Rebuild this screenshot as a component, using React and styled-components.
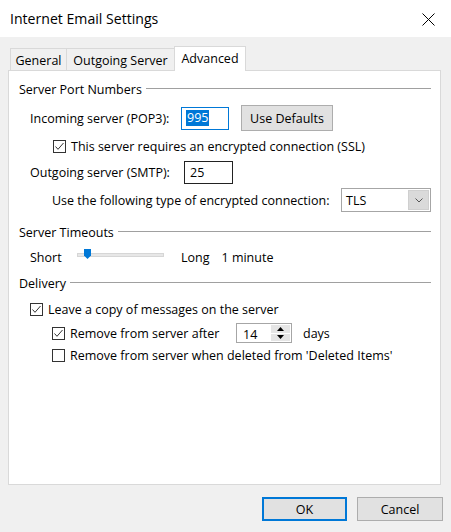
import React from 'react'
import styled, { createGlobalStyle } from 'styled-components'

const GlobalStyle = createGlobalStyle`
  html, body {
    margin: 0;
    padding: 0;
    background: #f0f0f0;
  }
  body {
    font-family: "Open Sans", "Noto Sans", sans-serif;
    font-size: 12.5px;
    color: #000;
  }
`

const Window = styled.div`
  width: 451px;
  height: 532px;
  display: flex;
  flex-direction: column;
  background: #f0f0f0;
  overflow: hidden;
`
const TitleBar = styled.div`
  height: 37px;
  background: #fff;
  display: flex;
  align-items: center;
  justify-content: space-between;
  padding: 0 16px 0 10px;
  flex-shrink: 0;
`
const Title = styled.span`
  font-size: 14.1px;
  margin-top: -1px;
`
const CloseIcon = styled.svg`
  width: 13px;
  height: 13px;
  margin-top: 1px;
`
const TabStrip = styled.div`
  display: flex;
  align-items: flex-end;
  height: 24px;
  margin: 9px 0 0 10px;
  flex-shrink: 0;
`
const Tab = styled.div`
  position: relative;
  box-sizing: border-box;
  height: ${(p) => (p.$active ? 25 : 22)}px;
  width: ${(p) => p.$w}px;
  margin-left: ${(p) => (p.$first ? 0 : -1)}px;
  margin-bottom: ${(p) => (p.$active ? -1 : 0)}px;
  border: 1px solid #d9d9d9;
  border-bottom: none;
  background: ${(p) => (p.$active ? '#fff' : '#f0f0f0')};
  z-index: ${(p) => (p.$active ? 2 : 1)};
  display: flex;
  align-items: center;
  justify-content: center;
  white-space: nowrap;
  padding-top: ${(p) => (p.$active ? 0 : 2)}px;
  padding-bottom: ${(p) => (p.$active ? 2 : 0)}px;
`
const Panel = styled.div`
  box-sizing: border-box;
  height: 415px;
  margin: 0 10px 0 8px;
  background: #fff;
  border: 1px solid #d9d9d9;
  display: flex;
  flex-direction: column;
  padding: 8px 9px 0 10px;
  flex-shrink: 0;
`
const GroupHeader = styled.div`
  display: flex;
  align-items: center;
  height: 20px;
  margin-top: ${(p) => p.$mt || 0}px;
  gap: 4px;
`
const GroupLine = styled.div`
  flex: 1;
  height: 1px;
  background: #a0a0a0;
  margin-top: -1px;
`
const Row = styled.div`
  display: flex;
  align-items: center;
  height: ${(p) => p.$h}px;
  margin-top: ${(p) => p.$mt || 0}px;
  padding-left: ${(p) => p.$indent || 0}px;
`
const Label = styled.span`
  display: inline-block;
  white-space: nowrap;
  width: ${(p) => (p.$w ? `${p.$w}px` : 'auto')};
  margin-right: ${(p) => p.$mr || 0}px;
  flex-shrink: 0;
`
const TextBox = styled.div`
  box-sizing: border-box;
  width: ${(p) => p.$w}px;
  height: 23px;
  border: 1px solid ${(p) => (p.$focused ? '#0078d7' : '#222')};
  background: #fff;
  display: flex;
  align-items: center;
  padding-left: ${(p) => p.$pl}px;
`
const Selected = styled.span`
  background: #0078d7;
  color: #fff;
  line-height: 16px;
  padding: 0 1px;
`
const Button = styled.button`
  box-sizing: border-box;
  width: ${(p) => p.$w}px;
  height: ${(p) => p.$h}px;
  margin-left: ${(p) => p.$ml || 0}px;
  background: #e1e1e1;
  border: ${(p) => (p.$default ? '2px solid #0078d7' : '1px solid #adadad')};
  font: inherit;
  color: #000;
  padding: 0;
  cursor: default;
`
const CheckRow = styled(Row)`
  gap: 5px;
`
const Box = styled.span`
  box-sizing: border-box;
  width: 13px;
  height: 13px;
  border: 1px solid #333;
  background: #fff;
  display: inline-flex;
  flex-shrink: 0;
`
const Select = styled.div`
  box-sizing: border-box;
  width: 91px;
  height: 24px;
  border: 1px solid #a6a6a6;
  background: #fff;
  display: flex;
  align-items: stretch;
`
const SelectValue = styled.span`
  flex: 1;
  display: flex;
  align-items: center;
  padding-left: 4px;
`
const SelectArrow = styled.span`
  width: 21px;
  margin: 1px;
  background: #dadada;
  border: 1px solid #cfcfcf;
  box-sizing: border-box;
  display: flex;
  align-items: center;
  justify-content: center;
`
const Slider = styled.div`
  position: relative;
  width: 87px;
  height: 16px;
  margin-right: 17px;
  display: flex;
  align-items: center;
  flex-shrink: 0;
`
const Track = styled.div`
  box-sizing: border-box;
  width: 100%;
  height: 4px;
  background: #e7e7e7;
  border: 1px solid #d6d6d6;
  margin-top: -5px;
`
const Thumb = styled.svg`
  position: absolute;
  left: 7px;
  top: 0;
  width: 7px;
  height: 10px;
`
const Spin = styled.div`
  box-sizing: border-box;
  width: 56px;
  height: 20px;
  border: 1px solid #a6a6a6;
  background: #fff;
  display: flex;
  margin-right: 6px;
`
const SpinValue = styled.span`
  flex: 1;
  display: flex;
  align-items: center;
  padding-left: 6px;
  padding-top: 2px;
`
const SpinButtons = styled.div`
  width: 19px;
  display: flex;
  flex-direction: column;
  gap: 1px;
  padding: 1px 1px 1px 0;
`
const SpinBtn = styled.span`
  flex: 1;
  background: #e5e5e5;
  display: flex;
  align-items: center;
  justify-content: center;
`
const Footer = styled.div`
  display: flex;
  justify-content: flex-end;
  gap: 10px;
  padding: 12px 8px 0 0;
`

const Check = () => (
  <svg width="11" height="11" viewBox="0 0 11 11">
    <polyline points="1.5,5.5 4,8.3 9.5,2" fill="none" stroke="#333" strokeWidth="1" />
  </svg>
)

function CheckBox({ checked }) {
  return <Box>{checked && <Check />}</Box>
}

export default function App() {
  return (
    <>
      <GlobalStyle />
      <Window>
        <TitleBar>
          <Title>Internet Email Settings</Title>
          <CloseIcon viewBox="0 0 13 13">
            <path d="M0.5 0.5 L12.5 12.5 M12.5 0.5 L0.5 12.5" stroke="#000" strokeWidth="1" />
          </CloseIcon>
        </TitleBar>

        <TabStrip>
          <Tab $first $w={57}>General</Tab>
          <Tab $w={109}>Outgoing Server</Tab>
          <Tab $active $w={72}>Advanced</Tab>
        </TabStrip>

        <Panel>
          <GroupHeader>
            <span>Server Port Numbers</span>
            <GroupLine />
          </GroupHeader>
          <Row $h={26} $mt={6} $indent={11}>
            <Label $w={151}>Incoming server (POP3):</Label>
            <TextBox $focused $w={48} $pl={4}>
              <Selected>995</Selected>
            </TextBox>
            <Button $w={92} $h={26} $ml={12}>Use Defaults</Button>
          </Row>
          <CheckRow $h={16} $mt={7} $indent={34}>
            <CheckBox checked />
            <Label>This server requires an encrypted connection (SSL)</Label>
          </CheckRow>
          <Row $h={24} $mt={6} $indent={11}>
            <Label $w={154}>Outgoing server (SMTP):</Label>
            <TextBox $w={49} $pl={5}>25</TextBox>
          </Row>
          <Row $h={24} $mt={4} $indent={33}>
            <Label $w={289}>Use the following type of encrypted connection:</Label>
            <Select>
              <SelectValue>TLS</SelectValue>
              <SelectArrow>
                <svg width="8" height="5" viewBox="0 0 8 5">
                  <polyline points="0.5,0.5 4,4 7.5,0.5" fill="none" stroke="#555" strokeWidth="1" />
                </svg>
              </SelectArrow>
            </Select>
          </Row>

          <GroupHeader $mt={10}>
            <span>Server Timeouts</span>
            <GroupLine />
          </GroupHeader>
          <Row $h={16} $mt={7} $indent={11}>
            <Label $w={47}>Short</Label>
            <Slider>
              <Track />
              <Thumb viewBox="0 0 7 10">
                <path d="M0 0 H7 V6.5 L3.5 10 L0 6.5 Z" fill="#0078d7" />
              </Thumb>
            </Slider>
            <Label $mr={12}>Long</Label>
            <Label>1 minute</Label>
          </Row>

          <GroupHeader $mt={8}>
            <span>Delivery</span>
            <GroupLine />
          </GroupHeader>
          <CheckRow $h={13} $mt={10} $indent={11}>
            <CheckBox checked />
            <Label>Leave a copy of messages on the server</Label>
          </CheckRow>
          <CheckRow $h={20} $mt={7} $indent={33}>
            <CheckBox checked />
            <Label $w={161}>Remove from server after</Label>
            <Spin>
              <SpinValue>14</SpinValue>
              <SpinButtons>
                <SpinBtn>
                  <svg width="7" height="4" viewBox="0 0 7 4">
                    <path d="M0 4 L3.5 0 L7 4 Z" fill="#000" />
                  </svg>
                </SpinBtn>
                <SpinBtn>
                  <svg width="7" height="4" viewBox="0 0 7 4">
                    <path d="M0 0 L7 0 L3.5 4 Z" fill="#000" />
                  </svg>
                </SpinBtn>
              </SpinButtons>
            </Spin>
            <Label>days</Label>
          </CheckRow>
          <CheckRow $h={13} $mt={6} $indent={33}>
            <CheckBox />
            <Label>Remove from server when deleted from 'Deleted Items'</Label>
          </CheckRow>
        </Panel>

        <Footer>
          <Button $default $w={85} $h={24}>OK</Button>
          <Button $w={86} $h={24}>Cancel</Button>
        </Footer>
      </Window>
    </>
  )
}
